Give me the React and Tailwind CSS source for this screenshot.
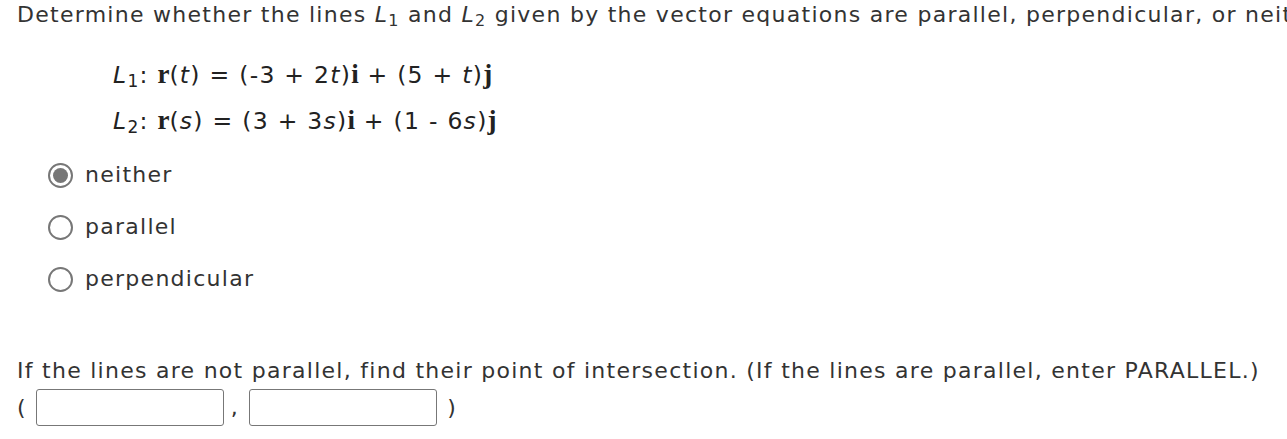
import React from "react";

function Radio({ checked, label }) {
  return (
    <div className="flex items-center h-[52px]">
      <span className="w-[25px] h-[25px] rounded-full border-2 border-[#777] flex items-center justify-center ml-[48px]">
        {checked && <span className="w-[15px] h-[15px] rounded-full bg-[#777]" />}
      </span>
      <span className="ml-[12px]">{label}</span>
    </div>
  );
}

const B = ({ children }) => <b className="font-bold font-['Liberation_Serif',serif] text-[27px] tracking-normal">{children}</b>;
const I = ({ children }) => <i className="italic">{children}</i>;

export default function App() {
  return (
    <div className="bg-white w-[1287px] h-[439px] overflow-hidden text-[#333] font-['DejaVu_Sans',Verdana,sans-serif] text-[22px] tracking-[1.27px] leading-[30px]">
      <p className="pl-[17px] whitespace-nowrap">
        Determine whether the lines <I>L</I><sub className="text-[16px]">1</sub> and <I>L</I><sub className="text-[16px]">2</sub> given by the vector equations are parallel, perpendicular, or neither.
      </p>
      <div className="pl-[113px] mt-[29px] flex flex-col gap-[15px] text-[#222] text-[23.5px]">
        <div className="whitespace-nowrap">
          <I>L</I><sub className="text-[17px]">1</sub>: <B>r</B>(<I>t</I>) = (-3 + 2<I>t</I>)<B>i</B> + (5 + <I>t</I>)<B>j</B>
        </div>
        <div className="whitespace-nowrap">
          <I>L</I><sub className="text-[17px]">2</sub>: <B>r</B>(<I>s</I>) = (3 + 3<I>s</I>)<B>i</B> + (1 - 6<I>s</I>)<B>j</B>
        </div>
      </div>
      <div className="mt-[13px]">
        <Radio checked label="neither" />
        <Radio label="parallel" />
        <Radio label="perpendicular" />
      </div>
      <p className="pl-[17px] mt-[51px] whitespace-nowrap">
        If the lines are not parallel, find their point of intersection. (If the lines are parallel, enter PARALLEL.)
      </p>
      <div className="pl-[17px] flex items-center mt-[3px]">
        <span>(</span>
        <input className="ml-[9px] w-[188px] h-[37px] border border-[#777] rounded-[3px]" />
        <span className="ml-[7px] mr-[10px]">,</span>
        <input className="w-[188px] h-[37px] border border-[#777] rounded-[3px]" />
        <span className="ml-[10px]">)</span>
      </div>
    </div>
  );
}
